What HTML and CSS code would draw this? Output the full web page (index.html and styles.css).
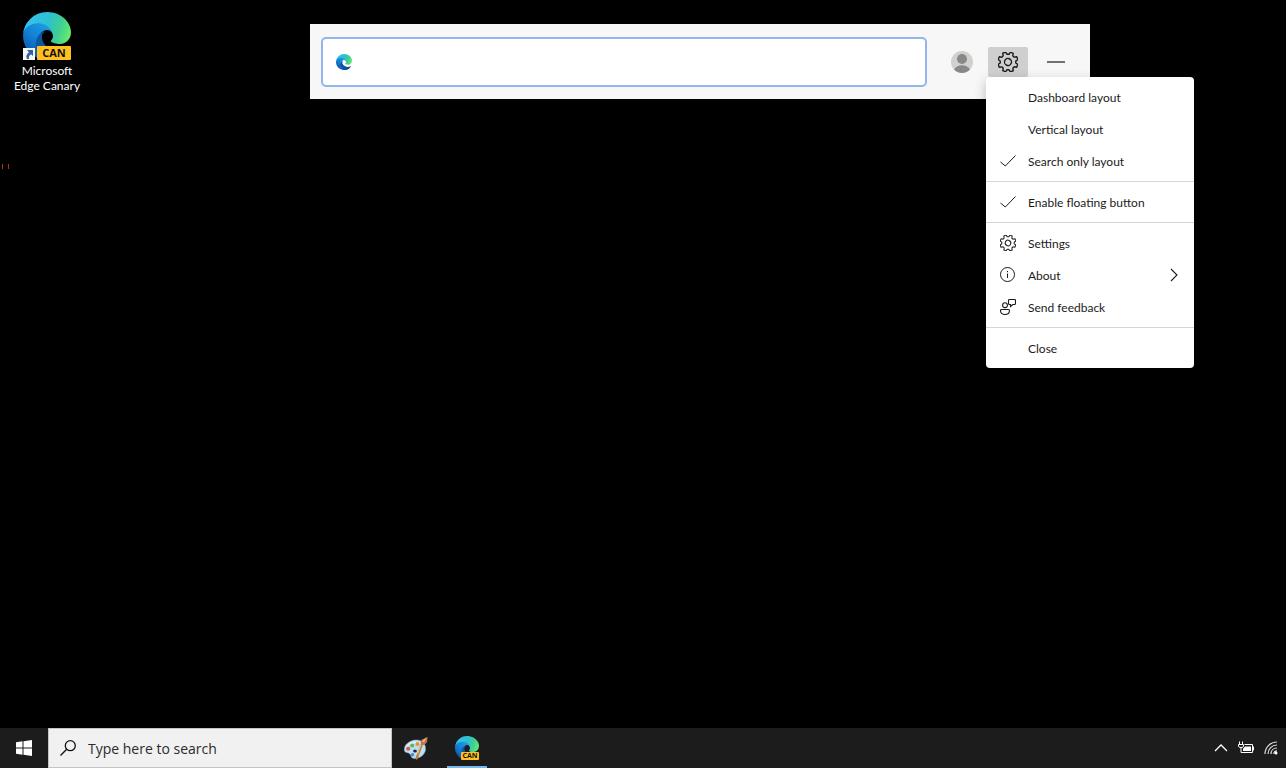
FILE: index.html
```html
<!DOCTYPE html>
<html lang="en">
<head>
<meta charset="utf-8">
<meta name="viewport" content="width=device-width, initial-scale=1">
<title>Desktop</title>
<link rel="stylesheet" href="styles.css">
</head>
<body>
<svg class="sprite" aria-hidden="true">
  <defs>
    <linearGradient id="edge-deep" x1="63" y1="178" x2="241" y2="178" gradientUnits="userSpaceOnUse">
      <stop offset="0" stop-color="#0c59a4"/><stop offset="1" stop-color="#114a8b"/>
    </linearGradient>
    <linearGradient id="edge-blue" x1="150" y1="90" x2="40" y2="220" gradientUnits="userSpaceOnUse">
      <stop offset="0" stop-color="#1b9de2"/><stop offset=".5" stop-color="#1383d8"/><stop offset="1" stop-color="#0a5cb0"/>
    </linearGradient>
    <linearGradient id="edge-green" x1="20" y1="60" x2="245" y2="130" gradientUnits="userSpaceOnUse">
      <stop offset="0" stop-color="#35c1f1"/><stop offset=".45" stop-color="#2dc0cf"/><stop offset=".75" stop-color="#3fcf93"/><stop offset="1" stop-color="#66eb6e"/>
    </linearGradient>
    <symbol id="edge" viewBox="0 0 256 256">
      <path fill="url(#edge-deep)" d="M235.7 195.5a93.7 93.7 0 0 1-10.6 4.7 101.9 101.9 0 0 1-35.9 6.4c-47.3 0-88.5-32.5-88.5-74.3a31.5 31.5 0 0 1 16.4-27.3c-42.8 1.8-53.8 46.4-53.8 72.5 0 74 68.1 81.4 82.8 81.4 7.9 0 19.8-2.3 27-4.6l1.3-.4a128.3 128.3 0 0 0 66.6-52.8 4 4 0 0 0-5.3-5.6z"/>
      <path fill="url(#edge-blue)" d="M105.7 241.4a79.2 79.2 0 0 1-22.7-21.3 80.7 80.7 0 0 1 29.5-120c3.2-1.5 8.5-4.1 15.6-4a32.4 32.4 0 0 1 25.7 13 31.9 31.9 0 0 1 6.3 18.7c0-.2 24.5-79.6-80-79.6-43.9 0-80 41.6-80 78.2a130.2 130.2 0 0 0 12.1 56 128 128 0 0 0 156.4 67 75.5 75.5 0 0 1-62.8-8z"/>
      <path fill="url(#edge-green)" d="M152.3 148.9c-.9 1-3.4 2.5-3.4 5.6 0 2.6 1.7 5.2 4.8 7.3 14.3 10 41.4 8.6 41.5 8.6a59.6 59.6 0 0 0 30.3-8.3 61.4 61.4 0 0 0 30.4-52.9c.3-22.4-8-37.3-11.3-43.9C223.5 23.9 177.7 0 128 0A128 128 0 0 0 0 126.2c.5-36.5 36.8-66 80-66 3.5 0 23.5.3 42 10 16.3 8.6 24.9 19 30.9 29.2 6.2 10.7 7.3 24.1 7.3 29.5 0 5.3-2.7 13.3-7.9 20z"/>
    </symbol>
    <symbol id="gear" viewBox="0.6 0.6 18.8 18.8">
      <g fill="none" stroke="currentColor" stroke-linejoin="round" transform="rotate(22.5 10 10)">
        <circle cx="10" cy="10" r="3.3"/>
        <path d="M8.6 .6 11.4 .6 11.9 2.9 13.6 3.6 15.7 2.3 17.7 4.3 16.4 6.4 17.1 8.1 19.4 8.6 19.4 11.4 17.1 11.9 16.4 13.6 17.7 15.7 15.7 17.7 13.6 16.4 11.9 17.1 11.4 19.4 8.6 19.4 8.1 17.1 6.4 16.4 4.3 17.7 2.3 15.7 3.6 13.6 2.9 11.9 .6 11.4 .6 8.6 2.9 8.1 3.6 6.4 2.3 4.3 4.3 2.3 6.4 3.6 8.1 2.9z"/>
      </g>
    </symbol>
    <symbol id="check" viewBox="0 0 16 16">
      <path d="M.5 9 5.3 13 15.5 2.5" fill="none" stroke="currentColor"/>
    </symbol>
  </defs>
</svg>

<main class="desktop">
  <div class="shortcuts">
    <a class="shortcut" href="#">
      <span class="shortcut-icon">
        <svg width="48" height="48" aria-hidden="true"><use href="#edge"/></svg>
        <svg class="shortcut-arrow" width="12" height="12" viewBox="0 0 12 12" aria-hidden="true">
          <path fill="#f5f5f5" d="M0 0h12v12H0z"/>
          <path fill="#2d5fa8" d="M4 2h6v6L8 6.200C6 7.500 5.500 9 6 11H4C2.500 8.500 3.500 6 6 4.200z"/>
        </svg>
        <span class="badge">CAN</span>
      </span>
      <span>Microsoft<br>Edge Canary</span>
    </a>
    <div class="marks"><i class="mark"></i><i class="mark"></i></div>
  </div>

  <section class="bar" aria-label="Edge bar">
    <label class="search">
      <svg width="16" height="16" aria-hidden="true"><use href="#edge"/></svg>
      <input class="search-input" type="text" aria-label="Search the web">
    </label>
    <div class="actions">
      <button class="action avatar" aria-label="Profile">
        <svg width="22" height="22" viewBox="0 0 22 22" aria-hidden="true">
          <circle cx="11" cy="11" r="11" fill="#d2d0ce"/>
          <circle cx="11" cy="8" r="5" fill="#8a8886"/>
          <path fill="#8a8886" d="M3 18.500C5 15.500 8 14.200 11 14.200s6 1.300 8 4.300A11 11 0 0 1 3 18.500z"/>
        </svg>
      </button>
      <div class="menu-anchor">
        <button class="action active" aria-label="Settings and more" aria-haspopup="menu" aria-expanded="true">
          <svg width="20" height="20" stroke-width="1.3" aria-hidden="true"><use href="#gear"/></svg>
        </button>
        <div class="menu" role="menu">
          <button class="item" role="menuitemradio" aria-checked="false"><span class="label">Dashboard layout</span></button>
          <button class="item" role="menuitemradio" aria-checked="false"><span class="label">Vertical layout</span></button>
          <button class="item" role="menuitemradio" aria-checked="true"><svg width="16" height="16" aria-hidden="true"><use href="#check"/></svg><span class="label">Search only layout</span></button>
          <hr class="rule">
          <button class="item" role="menuitemcheckbox" aria-checked="true"><svg width="16" height="16" aria-hidden="true"><use href="#check"/></svg><span class="label">Enable floating button</span></button>
          <hr class="rule">
          <button class="item" role="menuitem"><svg width="16" height="16" stroke-width="1.2" aria-hidden="true"><use href="#gear"/></svg><span class="label">Settings</span></button>
          <button class="item" role="menuitem">
            <svg width="16" height="16" viewBox="0 0 16 16" fill="none" stroke="currentColor" aria-hidden="true"><circle cx="7.500" cy="7.500" r="7"/><path d="M7.500 6.500V11M7.500 4v1.200"/></svg>
            <span class="label">About</span>
            <svg width="8" height="14" viewBox="0 0 8 14" fill="none" stroke="currentColor" stroke-width="1.100" aria-hidden="true"><path d="M1 1l6 6-6 6"/></svg>
          </button>
          <button class="item" role="menuitem">
            <svg width="16" height="16" viewBox="0 0 16 16" fill="none" stroke="currentColor" stroke-width="1.100" aria-hidden="true"><circle cx="5" cy="6.200" r="2.400"/><path d="M1.500 10.500h7q1 0 1 1c0 2.500-1.500 4-4.500 4s-4.500-1.500-4.500-4q0-1 1-1zM8.500 3V1.500q0-1 1-1h5q1 0 1 1v3q0 1-1 1h-1.700l-2.300 2v-2h-1q-1 0-1-1z"/></svg>
            <span class="label">Send feedback</span>
          </button>
          <hr class="rule">
          <button class="item" role="menuitem"><span class="label">Close</span></button>
        </div>
      </div>
      <button class="action" aria-label="Minimize">
        <svg width="18" height="18" viewBox="0 0 18 18" aria-hidden="true"><path stroke="#444" stroke-width="1.500" d="M0 9h18"/></svg>
      </button>
    </div>
  </section>
</main>

<footer class="taskbar">
  <button class="task start" aria-label="Start">
    <svg width="16" height="16" viewBox="0 0 16 16" fill="#fff" aria-hidden="true"><path d="M0 2.200 6.500 1.300v6.200H0zM7.500 1.200 16 0v7.500H7.500zM0 8.500h6.500v6.200L0 13.800zM7.500 8.500H16V16l-8.500-1.200z"/></svg>
  </button>
  <label class="task-search">
    <svg width="16" height="16" viewBox="0 0 16 16" fill="none" stroke="#111" stroke-width="1.300" aria-hidden="true"><circle cx="10.300" cy="5.700" r="5"/><path d="M6.700 9.300.5 15.500"/></svg>
    <input class="task-input" type="text" placeholder="Type here to search" aria-label="Type here to search">
  </label>
  <div class="apps">
    <button class="task" aria-label="Paint">
      <svg width="24" height="24" viewBox="0 0 24 24" aria-hidden="true">
        <path fill="#b9dff2" stroke="#8bbbd6" stroke-width=".5" d="M11.500 4C18 3.500 22 8 21.500 13.500 21 19 15 23 10 22.500c-3-.3-2.500-2.500-4-4.500S.5 17.500.3 14C0 8.500 5.500 4.500 11.500 4z"/>
        <path fill="#e2f4fc" d="M11 5.500c-4 0-8 2.500-9 6C6 7 13 6 19 9 17.500 6.500 14.500 5.300 11 5.500z"/>
        <ellipse cx="11" cy="15" rx="1.900" ry="1.500" fill="#1d2830"/>
        <circle cx="4.200" cy="12.800" r="2" fill="#e25545"/><circle cx="8.200" cy="9.500" r="2" fill="#62b44c"/><circle cx="13.500" cy="8" r="2" fill="#e78e31"/><circle cx="8.500" cy="18.800" r="1.700" fill="#4b83cd"/>
        <path stroke="#c77b32" stroke-width="2.200" stroke-linecap="round" d="M12.500 22.500 18 8"/>
        <path stroke="#eecb8b" stroke-width=".8" d="M13.500 18 17 9"/>
        <path fill="#bd7448" d="M16.800 7.500c-.5-3 1-4.500 2.500-4.500L23.500.8l-.3 4.400c-1.200 3-3 4-4.500 3.600z"/>
        <path fill="#e9b68b" d="M18 5 22.500 1.500 20 6.500z"/>
      </svg>
    </button>
    <button class="task running" aria-label="Microsoft Edge Canary">
      <span class="task-icon">
        <svg width="24" height="24" aria-hidden="true"><use href="#edge"/></svg>
        <span class="badge badge-small">CAN</span>
      </span>
    </button>
  </div>
  <div class="tray">
    <button class="tray-button" aria-label="Show hidden icons"><svg width="14" height="16" viewBox="0 0 14 16" fill="none" stroke="#fff" stroke-width="1.300" aria-hidden="true"><path d="M1 11l6-6 6 6"/></svg></button>
    <button class="tray-button" aria-label="Battery charging"><svg width="16" height="16" viewBox="0 0 16 16" fill="none" stroke="#fff" aria-hidden="true"><path d="M1.500 1.500V4M4.500 1.500V4M.5 4.500h5v1.800Q5.500 7.500 3 7.500T.5 6.300zM3 7.500v5h11.500v-8h-8M15.500 6.500v4"/><path fill="#fff" stroke="none" d="M5 8.500 7 6.500h6V11H5z"/></svg></button>
    <button class="tray-button" aria-label="Network"><svg width="14" height="14" viewBox="0 0 14 14" fill="none" stroke="#ddd" stroke-width="1.200" aria-hidden="true"><path d="M1 13C1 6.500 6 1 13 1M4 13c0-5 4-9 9-9M7 13c0-3.500 2.500-6 6-6M9.800 13c0-2 1.200-3.200 3.200-3.200"/><circle cx="12" cy="12" r="1.500" fill="#fff" stroke="none"/></svg></button>
  </div>
</footer>
</body>
</html>
```

FILE: styles.css
```css
* {
  box-sizing: border-box;
}

body {
  display: flex;
  flex-direction: column;
  min-height: 100vh;
  margin: 0;
  background: #000;
  color: #1b1b1b;
  font-family: Lato, "Open Sans", sans-serif;
  font-size: 12px;
}

button,
input {
  margin: 0;
  padding: 0;
  border: 0;
  background: none;
  color: inherit;
  font: inherit;
}

svg {
  display: block;
  flex: none;
}

.sprite {
  position: absolute;
  width: 0;
  height: 0;
}

.desktop {
  flex: 1;
  display: flex;
  align-items: flex-start;
  justify-content: space-between;
  padding-right: 196px;
}

.shortcuts {
  flex: none;
  width: 94px;
  margin-right: 216px;
  padding-top: 12px;
}

.shortcut {
  display: flex;
  flex-direction: column;
  align-items: center;
  gap: 3px;
  color: #fff;
  line-height: 15px;
  text-align: center;
  text-decoration: none;
}

.shortcut-icon,
.task-icon {
  position: relative;
}

.shortcut-arrow {
  position: absolute;
  left: 0;
  bottom: 0;
}

.badge {
  position: absolute;
  right: 0;
  bottom: 0;
  width: 34px;
  border-radius: 1px;
  background: #ffc020;
  color: #111;
  font-family: "Open Sans", sans-serif;
  font-size: 11px;
  font-weight: 700;
  line-height: 14px;
  text-align: center;
}

.badge-small {
  width: 18px;
  font-size: 7px;
  line-height: 8px;
}

.marks {
  display: flex;
  gap: 5px;
  padding: 71px 0 0 2px;
}

.mark {
  width: 1px;
  height: 5px;
  background: #a63a00;
}

.bar {
  flex: 1;
  display: flex;
  align-items: center;
  gap: 17px;
  margin-top: 24px;
  padding: 13px 14px 12px 11px;
  background: #f7f7f7;
}

.search {
  flex: 1;
  display: flex;
  align-items: center;
  gap: 12px;
  height: 50px;
  padding: 0 13px;
  border: 2px solid #94b4ef;
  border-radius: 5px;
  background: #fff;
}

.search-input {
  flex: 1;
  min-width: 0;
  height: 32px;
  outline: 0;
  font-size: 16px;
}

.actions {
  display: flex;
  align-items: center;
  gap: 8px;
}

.action {
  display: flex;
  align-items: center;
  justify-content: center;
  width: 40px;
  height: 30px;
  border-radius: 2px;
}

.avatar {
  width: 36px;
}

.active {
  background: #cfcfcf;
}

.menu-anchor {
  position: relative;
}

.menu {
  position: absolute;
  top: 100%;
  left: -2px;
  width: 208px;
  padding: 4px 0;
  border-radius: 4px;
  background: #fff;
  box-shadow: 0 4px 12px rgba(0, 0, 0, 0.25);
}

.item {
  display: grid;
  grid-template-columns: 16px 1fr auto;
  align-items: center;
  gap: 12px;
  width: 100%;
  height: 32px;
  padding: 0 16px 0 14px;
  text-align: left;
}

.label {
  grid-column: 2;
}

.rule {
  height: 1px;
  margin: 4px 0;
  border: 0;
  background: #d6d6d6;
}

.taskbar {
  display: flex;
  height: 40px;
  background: #1c1c1c;
}

.task {
  display: flex;
  align-items: center;
  justify-content: center;
  width: 40px;
}

.start {
  width: 48px;
}

.task-search {
  display: flex;
  align-items: center;
  gap: 12px;
  width: 344px;
  padding: 0 11px;
  border: 1px solid #c4c4c4;
  background: #f1f1f1;
}

.task-input {
  flex: 1;
  min-width: 0;
  outline: 0;
  font-family: "Open Sans", sans-serif;
  font-size: 14px;
}

.task-input::placeholder {
  color: #2b2b2b;
  opacity: 1;
}

.apps {
  flex: 1;
  display: flex;
  gap: 11px;
  padding-left: 4px;
}

.running {
  border-top: 2px solid transparent;
  border-bottom: 2px solid #76b9ed;
}

.tray {
  display: flex;
  align-items: center;
  gap: 10px;
  padding-right: 8px;
}

.tray-button {
  display: flex;
}
```
